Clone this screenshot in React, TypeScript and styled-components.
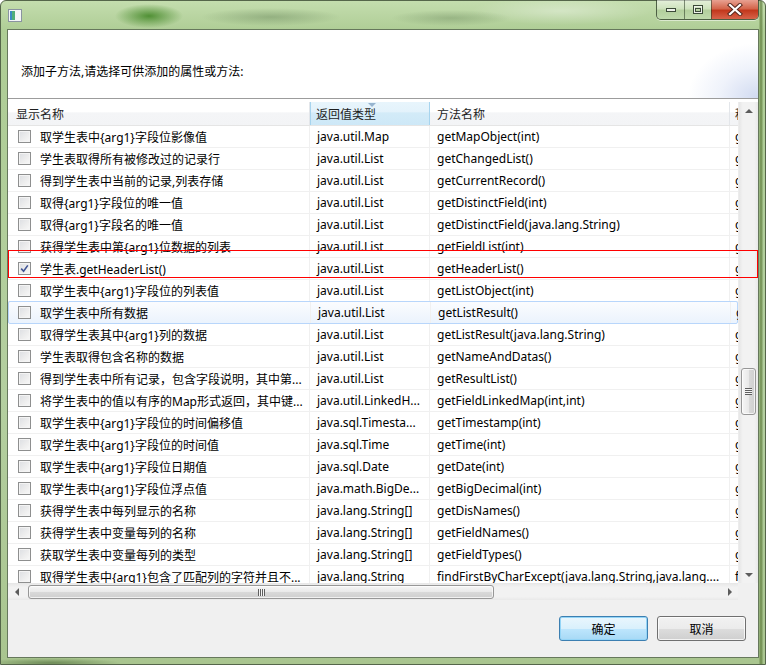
import styled, { createGlobalStyle, css } from 'styled-components';

const GlobalStyle = createGlobalStyle`
  html, body {
    margin: 0;
    padding: 0;
  }
  body {
    width: 766px;
    height: 665px;
    overflow: hidden;
    font-family: "Noto Sans", "Noto Sans CJK SC", sans-serif;
    font-size: 12px;
    color: #000;
  }
  * {
    box-sizing: border-box;
  }
`;

const Window = styled.div`
  position: relative;
  width: 766px;
  height: 665px;
  display: flex;
  flex-direction: column;
  border: 1px solid #55664a;
  border-radius: 6px 6px 0 0;
  background:
    radial-gradient(ellipse 34px 12px at 148px 15px, rgba(62, 132, 34, 0.85), rgba(62, 132, 34, 0) 100%),
    radial-gradient(ellipse 70px 9px at 270px 16px, rgba(80, 110, 70, 0.35), rgba(80, 110, 70, 0) 100%),
    radial-gradient(ellipse 60px 8px at 450px 17px, rgba(80, 110, 70, 0.3), rgba(80, 110, 70, 0) 100%),
    radial-gradient(ellipse 90px 14px at 560px 10px, rgba(255, 255, 255, 0.35), rgba(255, 255, 255, 0) 100%),
    radial-gradient(ellipse 70px 5px at 50px 662px, rgba(70, 100, 50, 0.6), rgba(70, 100, 50, 0) 100%),
    linear-gradient(90deg, rgba(255, 255, 255, 0) 758px, rgba(92, 122, 58, 0.65) 759px, rgba(92, 122, 58, 0.65) 761px, rgba(255, 255, 255, 0) 762px),
    linear-gradient(180deg, #c4ddae 0%, #aecd95 30px, #b4cfa0 60%, #a9c58f 100%);
`;

const TitleBar = styled.div`
  height: 28px;
  display: flex;
  align-items: flex-start;
  padding-left: 7px;
`;

const AppIcon = styled.svg`
  margin-top: 8px;
  width: 14px;
  height: 13px;
`;

const CaptionGroup = styled.div`
  margin-left: auto;
  margin-right: 6px;
  margin-top: -1px;
  display: flex;
  height: 20px;
  border: 1px solid rgba(40, 55, 35, 0.75);
  border-top: none;
  border-radius: 0 0 5px 5px;
  overflow: hidden;
  box-shadow: 0 1px 0 rgba(255, 255, 255, 0.5);
`;

const CaptionButton = styled.div<{ $kind: 'min' | 'max' | 'close' }>`
  width: ${(p) => (p.$kind === 'close' ? 47 : 27)}px;
  display: flex;
  align-items: center;
  justify-content: center;
  border-left: ${(p) => (p.$kind === 'min' ? 'none' : '1px solid rgba(40, 55, 35, 0.55)')};
  background: ${(p) =>
    p.$kind === 'close'
      ? 'linear-gradient(180deg, #e8a191 0%, #d4664c 45%, #c2381d 55%, #d8634a 100%)'
      : 'linear-gradient(180deg, rgba(255,255,255,0.55) 0%, rgba(255,255,255,0.25) 45%, rgba(160,190,140,0.35) 55%, rgba(200,225,185,0.5) 100%)'};
`;

const Client = styled.div`
  flex: 1;
  margin: 0 6px 6px 6px;
  border: 1px solid #66785c;
  display: flex;
  flex-direction: column;
  background: #f0f0f0;
  overflow: hidden;
`;

const Prompt = styled.div`
  height: 68px;
  display: flex;
  align-items: flex-end;
  padding: 0 0 18px 13px;
  line-height: 16px;
  background:
    radial-gradient(ellipse 70px 55px at 100% 100%, rgba(206, 216, 240, 0.95), rgba(228, 234, 248, 0.6) 55%, rgba(255, 255, 255, 0) 100%),
    #ffffff;
`;

const ListView = styled.div`
  display: flex;
  flex-direction: column;
  border-top: 1px solid #9c9c9c;
  padding-top: 3px;
  background: #ffffff;
`;

const ListMain = styled.div`
  height: 481px;
  display: flex;
`;

const Table = styled.div`
  flex: 1;
  display: flex;
  flex-direction: column;
  overflow: hidden;
`;

const HeaderRow = styled.div`
  height: 24px;
  display: flex;
  flex-shrink: 0;
  border-bottom: 1px solid #e5e5e5;
  background: linear-gradient(180deg, #ffffff 0%, #ffffff 45%, #f4f5f7 46%, #f3f4f6 100%);
`;

const HeaderCell = styled.div<{ $width: number; $hot?: boolean; $pad?: number }>`
  position: relative;
  flex: 0 0 ${(p) => p.$width}px;
  display: flex;
  align-items: center;
  padding-left: ${(p) => p.$pad ?? 6}px;
  color: #1e1e1e;
  white-space: nowrap;
  overflow: hidden;
  border-right: 1px solid #e3e6ea;
  ${(p) =>
    p.$hot &&
    css`
      background: linear-gradient(180deg, #e8f5fc 0%, #e3f2fb 45%, #d3ebf8 46%, #cde8f7 100%);
      border-left: 1px solid #a7d4ee;
      border-right: 1px solid #a7d4ee;
      padding-left: ${(p.$pad ?? 6) - 1}px;
    `}
`;

const SortArrow = styled.span`
  position: absolute;
  top: 1px;
  left: 57px;
  width: 0;
  height: 0;
  border-left: 4px solid transparent;
  border-right: 4px solid transparent;
  border-top: 4px solid #97b4cf;
`;

const Rows = styled.div`
  flex: 1;
  overflow: hidden;
  display: flex;
  flex-direction: column;
`;

const Row = styled.div<{ $hover?: boolean }>`
  height: 22px;
  flex-shrink: 0;
  display: flex;
  border-bottom: 1px solid #f0f0f0;
  ${(p) =>
    p.$hover &&
    css`
      margin-top: -1px;
      height: 23px;
      border: 1px solid #b8d6fb;
      border-radius: 2px;
      background: linear-gradient(180deg, #fbfcfe 0%, #ebf3fd 100%);
    `}
`;

const Cell = styled.div<{ $width: number; $pad?: number }>`
  flex: 0 0 ${(p) => p.$width}px;
  display: flex;
  align-items: center;
  gap: 9px;
  padding-left: ${(p) => p.$pad ?? 7}px;
  white-space: nowrap;
  overflow: hidden;
  border-right: 1px solid #f0f0f0;
`;

const CheckBox = styled.span`
  flex: 0 0 13px;
  width: 13px;
  height: 13px;
  border: 1px solid #8e8f8f;
  background: linear-gradient(135deg, #dcdee2 0%, #eeeeee 60%, #f8f8f8 100%);
  box-shadow: inset 0 0 0 1px #f4f4f4;
  display: flex;
  align-items: center;
  justify-content: center;
`;

const VScroll = styled.div`
  flex: 0 0 20px;
  display: flex;
  flex-direction: column;
  background: linear-gradient(90deg, #e6e6e6 0%, #f2f2f2 20%, #f2f2f2 80%, #e9e9e9 100%);
  border-left: 1px solid #ececec;
`;

const ArrowBox = styled.div<{ $size: number }>`
  flex: 0 0 ${(p) => p.$size}px;
  display: flex;
  align-items: center;
  justify-content: center;
`;

const Arrow = styled.span<{ $dir: 'up' | 'down' | 'left' | 'right' }>`
  width: 0;
  height: 0;
  ${(p) =>
    p.$dir === 'up' || p.$dir === 'down'
      ? css`
          border-left: 4px solid transparent;
          border-right: 4px solid transparent;
          ${p.$dir === 'up' ? 'border-bottom' : 'border-top'}: 4px solid #5c5c5c;
        `
      : css`
          border-top: 4px solid transparent;
          border-bottom: 4px solid transparent;
          ${p.$dir === 'left' ? 'border-right' : 'border-left'}: 4px solid #5c5c5c;
        `}
`;

const Track = styled.div<{ $vertical?: boolean }>`
  flex: 1;
  display: flex;
  flex-direction: ${(p) => (p.$vertical ? 'column' : 'row')};
`;

const Thumb = styled.div<{ $vertical?: boolean; $offset: number; $length: number }>`
  ${(p) =>
    p.$vertical
      ? css`
          margin: ${p.$offset}px 2px 0 2px;
          height: ${p.$length}px;
          background: linear-gradient(90deg, #f6f6f6 0%, #e9e9e9 50%, #d9d9d9 51%, #cfcfcf 100%);
        `
      : css`
          margin: 2px 0 1px ${p.$offset}px;
          width: ${p.$length}px;
          background: linear-gradient(180deg, #f6f6f6 0%, #e9e9e9 50%, #d9d9d9 51%, #cfcfcf 100%);
        `}
  border: 1px solid #979797;
  border-radius: 3px;
  box-shadow: inset 0 0 0 1px rgba(255, 255, 255, 0.7);
  display: flex;
  align-items: center;
  justify-content: center;
`;

const Grip = styled.span<{ $vertical?: boolean }>`
  width: 7px;
  height: 7px;
  background: repeating-linear-gradient(
    ${(p) => (p.$vertical ? '180deg' : '90deg')},
    #5f5f5f 0,
    #5f5f5f 1px,
    #f5f5f5 1px,
    #f5f5f5 2px
  );
`;

const HScrollRow = styled.div`
  height: 17px;
  display: flex;
`;

const HScroll = styled.div`
  flex: 1;
  display: flex;
  background: linear-gradient(180deg, #e6e6e6 0%, #f2f2f2 25%, #f2f2f2 80%, #e9e9e9 100%);
`;

const Corner = styled.div`
  flex: 0 0 20px;
  background: #f0f0f0;
`;

const ButtonBar = styled.div`
  flex: 1;
  display: flex;
  justify-content: flex-end;
  align-items: flex-start;
  gap: 9px;
  padding: 16px 12px 0 0;
  background: #f0f0f0;
`;

const DialogButton = styled.button<{ $default?: boolean }>`
  width: 89px;
  height: 25px;
  font: inherit;
  color: #000;
  border-radius: 3px;
  border: 1px solid ${(p) => (p.$default ? '#3c7fb1' : '#707070')};
  background: ${(p) =>
    p.$default
      ? 'linear-gradient(180deg, #eaf6fd 0%, #d9f0fc 50%, #bee6fd 51%, #a7d9f5 100%)'
      : 'linear-gradient(180deg, #f2f2f2 0%, #ebebeb 50%, #dddddd 51%, #cfcfcf 100%)'};
  box-shadow: inset 0 0 0 1px ${(p) => (p.$default ? '#94d5f7' : 'rgba(255,255,255,0.75)')};
  padding: 0;
`;

const Annotation = styled.div`
  position: absolute;
  left: 7px;
  top: 249px;
  width: 750px;
  height: 28px;
  border: 1px solid #ff0000;
  pointer-events: none;
`;

interface IMethodRow {
  name: string;
  type: string;
  method: string;
  checked?: boolean;
  hover?: boolean;
}

const rows: IMethodRow[] = [
  { name: '取学生表中{arg1}字段位影像值', type: 'java.util.Map', method: 'getMapObject(int)' },
  { name: '学生表取得所有被修改过的记录行', type: 'java.util.List', method: 'getChangedList()' },
  { name: '得到学生表中当前的记录,列表存储', type: 'java.util.List', method: 'getCurrentRecord()' },
  { name: '取得{arg1}字段位的唯一值', type: 'java.util.List', method: 'getDistinctField(int)' },
  { name: '取得{arg1}字段名的唯一值', type: 'java.util.List', method: 'getDistinctField(java.lang.String)' },
  { name: '获得学生表中第{arg1}位数据的列表', type: 'java.util.List', method: 'getFieldList(int)' },
  { name: '学生表.getHeaderList()', type: 'java.util.List', method: 'getHeaderList()', checked: true },
  { name: '取学生表中{arg1}字段位的列表值', type: 'java.util.List', method: 'getListObject(int)' },
  { name: '取学生表中所有数据', type: 'java.util.List', method: 'getListResult()', hover: true },
  { name: '取得学生表其中{arg1}列的数据', type: 'java.util.List', method: 'getListResult(java.lang.String)' },
  { name: '学生表取得包含名称的数据', type: 'java.util.List', method: 'getNameAndDatas()' },
  { name: '得到学生表中所有记录，包含字段说明，其中第...', type: 'java.util.List', method: 'getResultList()' },
  { name: '将学生表中的值以有序的Map形式返回，其中键...', type: 'java.util.LinkedH...', method: 'getFieldLinkedMap(int,int)' },
  { name: '取学生表中{arg1}字段位的时间偏移值', type: 'java.sql.Timesta...', method: 'getTimestamp(int)' },
  { name: '取学生表中{arg1}字段位的时间值', type: 'java.sql.Time', method: 'getTime(int)' },
  { name: '取学生表中{arg1}字段位日期值', type: 'java.sql.Date', method: 'getDate(int)' },
  { name: '取学生表中{arg1}字段位浮点值', type: 'java.math.BigDe...', method: 'getBigDecimal(int)' },
  { name: '获得学生表中每列显示的名称', type: 'java.lang.String[]', method: 'getDisNames()' },
  { name: '获得学生表中变量每列的名称', type: 'java.lang.String[]', method: 'getFieldNames()' },
  { name: '获取学生表中变量每列的类型', type: 'java.lang.String[]', method: 'getFieldTypes()' },
  {
    name: '取得学生表中{arg1}包含了匹配列的字符并且不...',
    type: 'java.lang.String',
    method: 'findFirstByCharExcept(java.lang.String,java.lang....',
  },
];

const widths = [302, 120, 300, 300];

function App() {
  return (
    <Window>
      <GlobalStyle />
      <TitleBar>
        <AppIcon viewBox="0 0 14 13">
          <rect x="0.5" y="0.5" width="13" height="12" fill="#f4f6f8" stroke="#8a94a0" />
          <rect x="2" y="2" width="5" height="9" fill="#3b8ac4" />
          <rect x="4" y="2" width="3" height="9" fill="#4fae7a" />
        </AppIcon>
        <CaptionGroup>
          <CaptionButton $kind="min">
            <svg width="12" height="6" viewBox="0 0 12 6">
              <rect x="1.5" y="1.5" width="9" height="3" fill="#eef2ea" stroke="#3b4a38" />
            </svg>
          </CaptionButton>
          <CaptionButton $kind="max">
            <svg width="12" height="11" viewBox="0 0 12 11">
              <rect x="1.5" y="1.5" width="9" height="8" fill="none" stroke="#3b4a38" />
              <rect x="2.5" y="2.5" width="7" height="6" fill="none" stroke="#eef2ea" strokeWidth="1" />
              <rect x="3.5" y="4.5" width="5" height="3" fill="none" stroke="#3b4a38" />
            </svg>
          </CaptionButton>
          <CaptionButton $kind="close">
            <svg width="16" height="13" viewBox="0 0 16 13">
              <path d="M3 2 L13 11 M13 2 L3 11" stroke="#5a2a20" strokeWidth="4.2" strokeLinecap="square" />
              <path d="M3 2 L13 11 M13 2 L3 11" stroke="#ffffff" strokeWidth="2.2" strokeLinecap="square" />
            </svg>
          </CaptionButton>
        </CaptionGroup>
      </TitleBar>
      <Client>
        <Prompt>添加子方法,请选择可供添加的属性或方法:</Prompt>
        <ListView>
          <ListMain>
            <Table>
              <HeaderRow>
                <HeaderCell $width={widths[0]} $pad={8}>显示名称</HeaderCell>
                <HeaderCell $width={widths[1]} $hot>
                  <SortArrow />
                  返回值类型
                </HeaderCell>
                <HeaderCell $width={widths[2]} $pad={7}>方法名称</HeaderCell>
                <HeaderCell $width={widths[3]} $pad={5}>程序方法</HeaderCell>
              </HeaderRow>
              <Rows>
                {rows.map((row) => (
                  <Row key={row.method + row.name} $hover={row.hover}>
                    <Cell $width={widths[0]} $pad={row.hover ? 9 : 10}>
                      <CheckBox>
                        {row.checked && (
                          <svg width="9" height="9" viewBox="0 0 9 9">
                            <path d="M1.2 4.6 L3.6 7.2 L7.8 1.4" fill="none" stroke="#3f5394" strokeWidth="1.6" />
                          </svg>
                        )}
                      </CheckBox>
                      {row.name}
                    </Cell>
                    <Cell $width={widths[1]}>{row.type}</Cell>
                    <Cell $width={widths[2]}>{row.method}</Cell>
                    <Cell $width={widths[3]} $pad={5}>{row.method}</Cell>
                  </Row>
                ))}
              </Rows>
            </Table>
            <VScroll>
              <ArrowBox $size={17}>
                <Arrow $dir="up" />
              </ArrowBox>
              <Track $vertical>
                <Thumb $vertical $offset={249} $length={47}>
                  <Grip $vertical />
                </Thumb>
              </Track>
              <ArrowBox $size={17}>
                <Arrow $dir="down" />
              </ArrowBox>
            </VScroll>
          </ListMain>
          <HScrollRow>
            <HScroll>
              <ArrowBox $size={18}>
                <Arrow $dir="left" />
              </ArrowBox>
              <Track>
                <Thumb $offset={2} $length={466}>
                  <Grip />
                </Thumb>
              </Track>
              <ArrowBox $size={17}>
                <Arrow $dir="right" />
              </ArrowBox>
            </HScroll>
            <Corner />
          </HScrollRow>
        </ListView>
        <ButtonBar>
          <DialogButton $default>确定</DialogButton>
          <DialogButton>取消</DialogButton>
        </ButtonBar>
      </Client>
      <Annotation />
    </Window>
  );
}

export default App;
